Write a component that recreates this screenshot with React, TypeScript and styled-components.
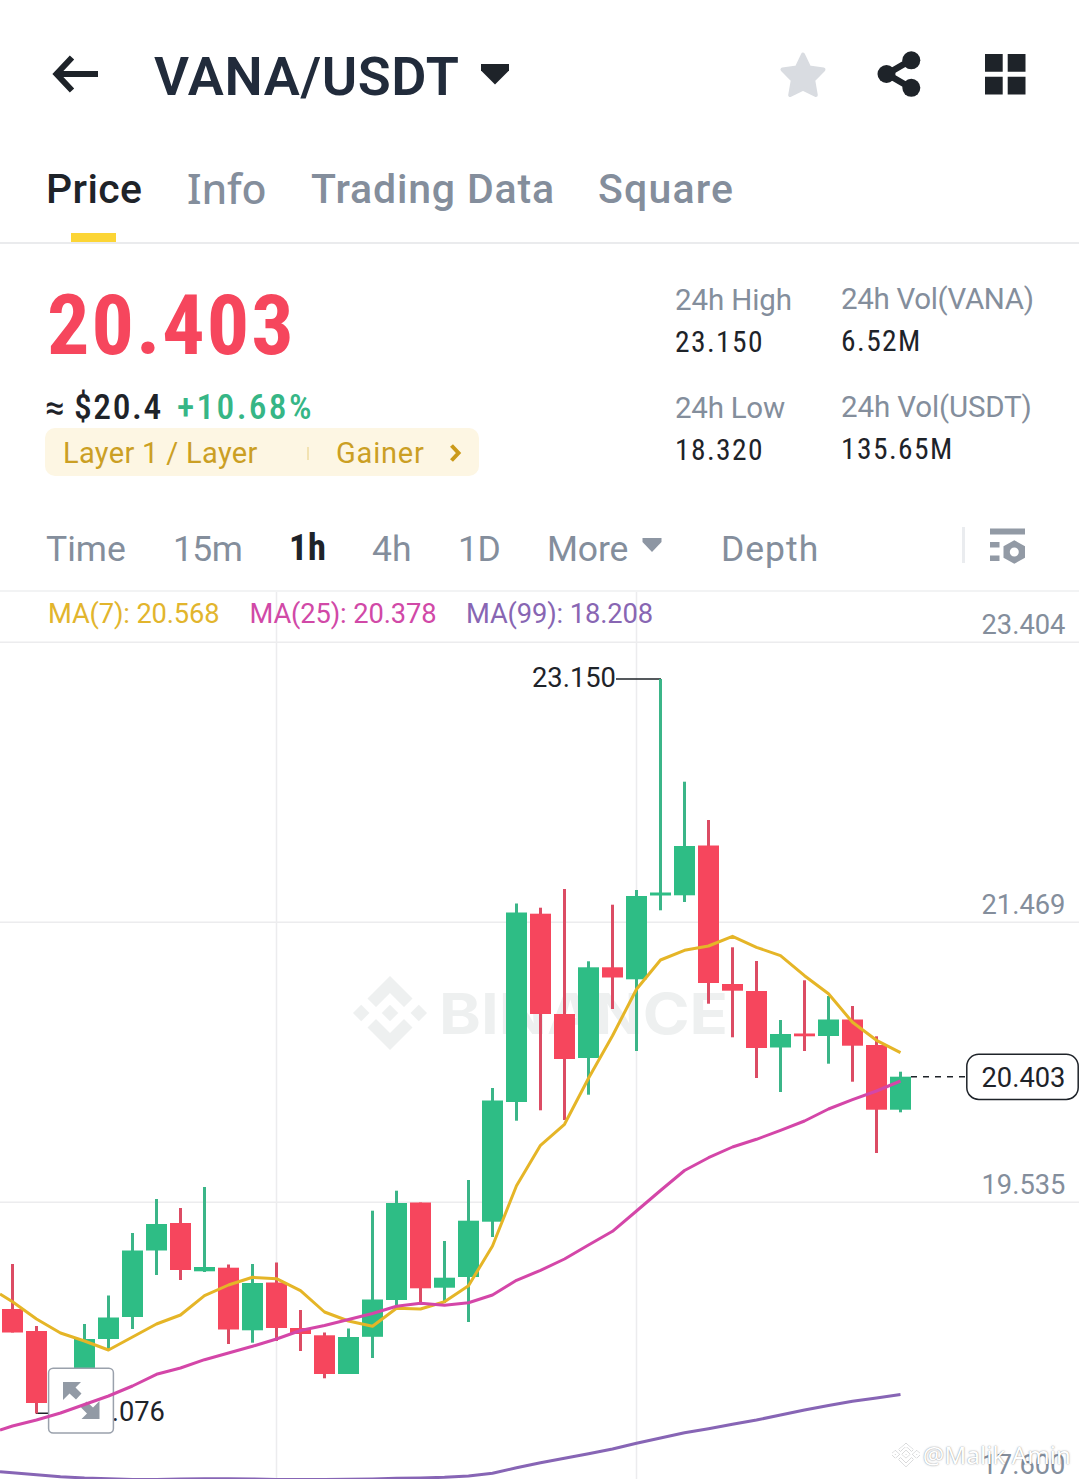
import React from "react";
import styled, { createGlobalStyle } from "styled-components";

const ink = "#1e2329";
const muted = "#848e9c";
const up = "#2ebd85";
const down = "#f6465d";
const narrow = `"Roboto Condensed", Roboto, sans-serif`;
const humanist = `"Noto Sans", Roboto, sans-serif`;

const GlobalStyle = createGlobalStyle`
  *, *::before, *::after { box-sizing: border-box; }
  body { margin: 0; background: #fff; color: ${ink}; font-family: Roboto, sans-serif; }
`;

const Screen = styled.main`
  position: relative;
  width: 1079px;
  height: 1479px;
  overflow: hidden;
  display: flex;
  flex-direction: column;
  background: #fff;
`;

const Header = styled.header`
  height: 148px;
  padding: 0 53px 0 50px;
  display: flex;
  align-items: center;
  justify-content: space-between;
  svg { display: block; }
`;

const HeaderGroup = styled.div<{ $gap: number }>`
  display: flex;
  align-items: center;
  gap: ${(p) => p.$gap}px;
`;

const Pair = styled.h1`
  margin: 5px -32px 0 0;
  width: 304px;
  font-size: 54px;
  line-height: 64px;
  font-weight: 600;
  letter-spacing: 0.65px;
  color: #212b3b;
  white-space: nowrap;
`;

const Tabs = styled.nav`
  height: 96px;
  padding-left: 46px;
  display: flex;
  align-items: stretch;
  border-bottom: 2px solid #eaebed;
`;

const Tab = styled.a<{ $active?: boolean; $width: number; $spacing: number; $serifI?: boolean }>`
  width: ${(p) => p.$width}px;
  display: flex;
  flex-direction: column;
  justify-content: space-between;
  padding-top: ${(p) => (p.$serifI ? 15 : 16)}px;
  font-family: ${(p) => (p.$serifI ? humanist : "inherit")};
  font-size: 41px;
  line-height: 50px;
  font-weight: 500;
  letter-spacing: ${(p) => p.$spacing}px;
  white-space: nowrap;
  color: ${(p) => (p.$active ? ink : muted)};
`;

const TabMark = styled.span`
  width: 45px;
  height: 9px;
  margin-left: 25px;
  background: #fcd535;
`;

const Summary = styled.section`
  height: 256px;
  padding: 36px 0 0 45px;
  display: flex;
`;

const PriceBlock = styled.div`
  width: 630px;
`;

const LastPrice = styled.div`
  padding-left: 2px;
  font-family: ${narrow};
  font-size: 84px;
  line-height: 92px;
  font-weight: 700;
  letter-spacing: 2px;
  color: ${down};
`;

const SubPrice = styled.div`
  height: 56px;
  padding-top: 13px;
  display: flex;
  font-family: ${narrow};
  font-size: 35.5px;
  line-height: 44px;
  font-weight: 500;
  white-space: pre;
`;

const Approx = styled.span`
  width: 29px;
  font-family: Roboto, sans-serif;
  font-size: 34px;
`;

const Fiat = styled.span`
  width: 103px;
  letter-spacing: 1.6px;
`;

const Change = styled.span`
  color: #36b686;
  letter-spacing: 2.3px;
`;

const TagBar = styled.div`
  width: 434px;
  height: 48px;
  padding: 2px 16px 0 18px;
  display: flex;
  align-items: center;
  border-radius: 10px;
  background: #fdf6e3;
  color: #cb9f24;
  font-size: 29px;
  line-height: 46px;
  white-space: nowrap;
`;

const TagName = styled.span<{ $width: number; $spacing: number }>`
  width: ${(p) => p.$width}px;
  letter-spacing: ${(p) => p.$spacing}px;
`;

const TagRule = styled.span`
  width: 2px;
  height: 13px;
  margin: 0 27px 0 0;
  background: #f2e2b2;
`;

const Stats = styled.dl`
  margin: 0;
  display: grid;
  grid-template-columns: 166px 220px;
  grid-auto-rows: 108px;
`;

const Stat = styled.div<{ $lift?: boolean }>`
  padding-top: ${(p) => (p.$lift ? 0 : 1)}px;
`;

const StatName = styled.dt<{ $spacing: number }>`
  font-size: 29.5px;
  line-height: 38px;
  letter-spacing: ${(p) => p.$spacing}px;
  color: ${muted};
  white-space: nowrap;
`;

const StatValue = styled.dd`
  margin: 3px 0 0;
  font-family: ${narrow};
  font-size: 29.5px;
  line-height: 40px;
  letter-spacing: 1.4px;
`;

const Intervals = styled.nav`
  height: 92px;
  padding: 0 53px 0 46px;
  display: flex;
  border-bottom: 2px solid #f2f3f4;
`;

const Interval = styled.a<{ $width: number; $spacing?: number; $active?: boolean }>`
  width: ${(p) => p.$width}px;
  padding-top: ${(p) => (p.$active ? 26 : 27)}px;
  font-family: ${(p) => (p.$active ? narrow : "inherit")};
  font-weight: ${(p) => (p.$active ? 700 : 400)};
  font-size: ${(p) => (p.$active ? 36.5 : 35.5)}px;
  line-height: 44px;
  letter-spacing: ${(p) => p.$spacing ?? 0}px;
  color: ${(p) => (p.$active ? ink : muted)};
  white-space: nowrap;
`;

const MoreArrow = styled.svg`
  display: block;
  margin: 38px 59px 0 0;
`;

const Divider = styled.span`
  width: 3px;
  height: 36px;
  margin: 27px 25px 0 auto;
  background: #eaecef;
`;

const SettingsIcon = styled.svg`
  display: block;
  margin-top: 28px;
`;

const Chart = styled.svg`
  display: block;
  width: 1079px;
  height: 887px;
  font-family: Roboto, sans-serif;
  font-size: 27.3px;
`;

const Credit = styled.div`
  position: absolute;
  right: 8px;
  bottom: 7px;
  display: flex;
  align-items: center;
  gap: 3px;
  color: #fff;
  font-family: ${humanist};
  font-size: 24px;
  line-height: 34px;
  letter-spacing: 0.1px;
  text-shadow: 0 0 1.5px rgba(50, 55, 62, 0.7);
  white-space: nowrap;
  svg { display: block; filter: drop-shadow(0 0.5px 0.7px rgba(50, 55, 62, 0.75)); }
`;

type Candle = [slot: number, dir: "u" | "d", open: number, close: number, high: number, low: number];

const candles: Candle[] = [
  [0, "d", 1309, 1332.5, 1264, 1332.5],
  [1, "d", 1331, 1403, 1326, 1413.5],
  [3, "u", 1339, 1400, 1324, 1400],
  [4, "u", 1317.5, 1339, 1295.5, 1349],
  [5, "u", 1250.5, 1317, 1233, 1329],
  [6, "u", 1224, 1250.5, 1199, 1275],
  [7, "d", 1223, 1270, 1208, 1280],
  [8, "u", 1267, 1271.3, 1187, 1272],
  [9, "d", 1267.7, 1329.5, 1264.5, 1344],
  [10, "u", 1283, 1330.3, 1264, 1342.7],
  [11, "d", 1282.5, 1328, 1262.5, 1341],
  [12, "d", 1328, 1334, 1310, 1351],
  [13, "d", 1335.3, 1374, 1332.5, 1378.3],
  [14, "u", 1337, 1374, 1328.5, 1374],
  [15, "u", 1299.5, 1336.8, 1210.7, 1358],
  [16, "u", 1203, 1300, 1190.7, 1306],
  [17, "d", 1202.5, 1288.3, 1202.5, 1303],
  [18, "u", 1277.7, 1287.7, 1241, 1303],
  [19, "u", 1220.7, 1277, 1180, 1322],
  [20, "u", 1100.5, 1221.7, 1088, 1237],
  [21, "u", 912.5, 1102, 903.5, 1120.7],
  [22, "d", 913.7, 1014, 907.7, 1110.3],
  [23, "d", 1014, 1059, 889, 1120],
  [24, "u", 967.3, 1058, 961.3, 1094.7],
  [25, "d", 967.3, 977.5, 904.7, 1009],
  [26, "u", 896, 979.3, 890, 1051],
  [27, "u", 892.5, 895.5, 679, 910.3],
  [28, "u", 846, 895.3, 781.7, 902],
  [29, "d", 845.5, 983, 820, 1003.7],
  [30, "d", 984, 990.7, 947.3, 1037.3],
  [31, "d", 991, 1048, 961, 1078],
  [32, "u", 1034, 1047.5, 1020, 1092],
  [33, "d", 1033.5, 1036.3, 980.3, 1051],
  [34, "u", 1019.5, 1036, 996, 1063.7],
  [35, "d", 1019.5, 1045.7, 1006, 1081.7],
  [36, "d", 1045, 1109.7, 1036.3, 1153],
  [37, "u", 1076.7, 1109.7, 1071.7, 1112.3],
];

const ma7 = [
  1301.7, 1319, 1333, 1341, 1350, 1337, 1324, 1315, 1295.7, 1285, 1277.3, 1278.7, 1290.7, 1312, 1321,
  1326.3, 1308.3, 1309, 1301.7, 1285.7, 1246, 1185.7, 1145.3, 1124.3, 1078.3, 1035.7, 989.3, 960,
  950.3, 946, 936.3, 947.3, 955.7, 975.7, 993.7, 1022.3, 1040.3, 1052.7,
];
const ma25 = [
  1426, 1420, 1413, 1404.5, 1396, 1386, 1374.3, 1368, 1359.7, 1353, 1346.3, 1339, 1330.5, 1325.5, 1319.5,
  1313.5, 1306.3, 1303.3, 1305.3, 1302.7, 1295, 1280.3, 1270.3, 1259, 1245, 1231.3, 1211, 1190.5,
  1170.5, 1157.7, 1147, 1139.3, 1130.3, 1121, 1109, 1099.7, 1091, 1081,
];
const ma99 = [
  1472.7, 1474.7, 1476.7, 1478, 1478.7, 1479.5, 1479.5, 1479, 1478.7, 1478.7, 1479, 1479.5, 1479.5, 1479.5,
  1479.3, 1479, 1478.3, 1478, 1477.3, 1476, 1473.3, 1467.7, 1462.7, 1458.3, 1453.7, 1449, 1443.3,
  1438, 1432.7, 1428.7, 1424.3, 1420, 1415, 1410, 1405.5, 1401.3, 1398, 1394.5,
];

const slotX = (i: number) => 12.5 + i * 24;
const trace = (start: number, ys: number[]) =>
  `0,${start} ` + ys.map((y, i) => `${slotX(i)},${y}`).join(" ");

const Star = () => (
  <svg width="50" height="50" viewBox="0 0 50 50">
    <path
      d="M25 4.5 31.2 17.6 45.5 19.5 35.2 30 37.8 45 25 38.6 12.2 45 14.8 30 4.5 19.5 18.8 17.6Z"
      fill="#d9dce1" stroke="#d9dce1" strokeWidth="4" strokeLinejoin="round"
      transform="translate(0 1)"
    />
  </svg>
);

const Share = () => (
  <svg width="44" height="46" viewBox="0 0 44 46" fill={ink}>
    <path d="M34 9 10 23 34 37" fill="none" stroke={ink} strokeWidth="6.5" />
    <circle cx="34.3" cy="9.3" r="9" />
    <circle cx="9.5" cy="23" r="9" />
    <circle cx="34.3" cy="36.8" r="9" />
  </svg>
);

const GridIcon = () => (
  <svg width="41" height="41" viewBox="0 0 41 41" fill={ink}>
    <path d="M0 0H17.7V17.7H0ZM22.7 0H40.5V17.7H22.7ZM0 22.7H17.7V40.5H0ZM22.7 22.7H40.5V40.5H22.7Z" />
  </svg>
);

const CandleChart = () => (
  <Chart viewBox="0 592 1079 887">
    <g stroke="#ececee" strokeWidth="1.5">
      <path d="M0 642.3H1079M0 922.3H1079M0 1202.3H1079M276.5 592V1479M636.5 592V1479" />
    </g>
    <g fill="#eef0f0">
      <path d="M390 976 412.5 998.5 404 1007 390 993 376 1007 367.5 998.5Z" />
      <path d="M390 1050 412.5 1027.5 404 1019 390 1033 376 1019 367.5 1027.5Z" />
      <path d="M390 1004.8 398.2 1013 390 1021.2 381.8 1013ZM361.2 1004.8 369.4 1013 361.2 1021.2 353 1013ZM418.8 1004.8 427 1013 418.8 1021.2 410.6 1013Z" />
      <text x="439" y="1034" fontFamily="Inter, sans-serif" fontWeight="700" fontSize="57" textLength="289" lengthAdjust="spacingAndGlyphs">BINANCE</text>
    </g>

    <g fill={ink}>
      <text x="532" y="686.7">23.150</text>
      <text x="81" y="1420.7">18.076</text>
      <path d="M616 679H661M36 1413.3H80" stroke={ink} strokeWidth="1.6" />
    </g>

    {candles.map(([i, dir, top, bottom, high, low]) => (
      <g key={i}>
        <rect x={slotX(i) - 1.5} y={high} width="3" height={low - high} fill={dir === "u" ? "#3bb588" : "#dc4c64"} />
        <rect x={slotX(i) - 10.5} y={top} width="21" height={bottom - top} fill={dir === "u" ? up : down} />
      </g>
    ))}

    <rect x="48.6" y="1368.3" width="64.8" height="64.8" rx="4.5" fill="#fff" stroke="#9aa1ac" strokeWidth="1.5" />
    <g fill="#929aa5">
      <path d="M63 1382H81L75.5 1387.5 81.5 1393.5 76 1399.5 69.5 1393.5 63 1400Z" />
      <path d="M99.5 1419H81.5L87 1413.5 81 1407.5 86.5 1401.5 93 1407.5 99.5 1401Z" />
    </g>

    <g fill="none" strokeWidth="3" strokeLinejoin="round">
      <polyline points={trace(1294, ma7)} stroke="#e5b527" />
      <polyline points={trace(1430, ma25)} stroke="#d446a8" />
      <polyline points={trace(1471.7, ma99)} stroke="#8765b5" />
    </g>

    <path d="M911 1076.8H966" stroke={ink} strokeWidth="1.6" strokeDasharray="6 6" />
    <rect x="966.8" y="1054.2" width="111.4" height="45.2" rx="12" fill="#fff" stroke={ink} strokeWidth="1.5" />
    <text x="981.5" y="1086.8" fill={ink}>20.403</text>

    <g fill={muted}>
      <text x="981.5" y="634">23.404</text>
      <text x="981.5" y="914">21.469</text>
      <text x="981.5" y="1193.8">19.535</text>
      <text x="981.5" y="1473.8">17.600</text>
    </g>

    <text x="48" y="622.7" fill="#e2b52d" textLength="171.5">MA(7): 20.568</text>
    <text x="249.5" y="622.7" fill="#d149a7" textLength="187">MA(25): 20.378</text>
    <text x="466" y="622.7" fill="#8866b3" textLength="187">MA(99): 18.208</text>
  </Chart>
);

export default function App() {
  return (
    <>
      <GlobalStyle />
      <Screen>
        <Header>
          <HeaderGroup $gap={54}>
            <svg width="50" height="44" viewBox="0 0 50 44" fill="none" stroke={ink} strokeWidth="6">
              <path d="M48 22H7M22 5.5 6.5 22 22 38.5" />
            </svg>
            <Pair>VANA/USDT</Pair>
            <svg width="30" height="22" viewBox="0 0 30 22" fill={ink}>
              <path d="M1 1H29V7.5L15 21.5 1 7.5Z" />
            </svg>
          </HeaderGroup>
          <HeaderGroup $gap={49}>
            <Star />
            <HeaderGroup $gap={64}>
              <Share />
              <GridIcon />
            </HeaderGroup>
          </HeaderGroup>
        </Header>

        <Tabs>
          <Tab $active $width={141} $spacing={0.37}>Price<TabMark /></Tab>
          <Tab $width={124} $spacing={-0.1} $serifI>Info</Tab>
          <Tab $width={287} $spacing={0.84}>Trading Data</Tab>
          <Tab $width={140} $spacing={1.19}>Square</Tab>
        </Tabs>

        <Summary>
          <PriceBlock>
            <LastPrice>20.403</LastPrice>
            <SubPrice>
              <Approx>≈</Approx>
              <Fiat>$20.4</Fiat>
              <Change>+10.68%</Change>
            </SubPrice>
            <TagBar>
              <TagName $width={244} $spacing={0.33}>Layer 1 / Layer</TagName>
              <TagRule />
              <TagName $width={113} $spacing={0.81}>Gainer</TagName>
              <svg width="14" height="20" viewBox="0 0 14 20" fill="none" stroke="#cb9a1a" strokeWidth="4">
                <path d="M2.5 2.5 9.5 10 2.5 17.5" />
              </svg>
            </TagBar>
          </PriceBlock>
          <Stats>
            <Stat>
              <StatName $spacing={-0.1}>24h High</StatName>
              <StatValue>23.150</StatValue>
            </Stat>
            <Stat $lift>
              <StatName $spacing={-0.33}>24h Vol(VANA)</StatName>
              <StatValue>6.52M</StatValue>
            </Stat>
            <Stat>
              <StatName $spacing={-0.25}>24h Low</StatName>
              <StatValue>18.320</StatValue>
            </Stat>
            <Stat $lift>
              <StatName $spacing={-0.13}>24h Vol(USDT)</StatName>
              <StatValue>135.65M</StatValue>
            </Stat>
          </Stats>
        </Summary>

        <Intervals>
          <Interval $width={127}>Time</Interval>
          <Interval $width={116} $spacing={-0.6}>15m</Interval>
          <Interval $width={83} $spacing={0.6} $active>1h</Interval>
          <Interval $width={86}>4h</Interval>
          <Interval $width={89} $spacing={-0.4}>1D</Interval>
          <Interval $width={95} $spacing={-0.15}>More</Interval>
          <MoreArrow width="20" height="15" viewBox="0 0 20 15" fill="#8d96a3">
            <path d="M0.5 0H19.5V4L10 14 0.5 4Z" />
          </MoreArrow>
          <Interval $width={110} $spacing={1}>Depth</Interval>
          <Divider />
          <SettingsIcon width="36" height="36" viewBox="0 0 36 36" fill="#929aa5">
            <path d="M0 0.5H35V6.5H0ZM0 14H9.5V19.5H0ZM0 27.5H9.5V33H0Z" />
            <path fillRule="evenodd" d="M24.3 12.3 35 18.3V29.7L24.3 35.7 13.5 29.7V18.3ZM24.3 19.5A4.5 4.5 0 1 0 24.3 28.5 4.5 4.5 0 1 0 24.3 19.5Z" />
          </SettingsIcon>
        </Intervals>

        <CandleChart />

        <Credit>
          <svg width="28" height="24" viewBox="0 0 28 24" fill="none" stroke="#fff" strokeWidth="2.6">
            <path d="M7.5 7.5 14 1.8 20.5 7.5M7.5 15.5 14 22 20.5 15.5M1 11.2 3.4 13.4 5.8 11.2 3.4 9ZM22.2 11.2 24.6 13.4 27 11.2 24.6 9ZM11.6 11.2 14 13.4 16.4 11.2 14 9Z" />
          </svg>
          @Malik Amin
        </Credit>
      </Screen>
    </>
  );
}
